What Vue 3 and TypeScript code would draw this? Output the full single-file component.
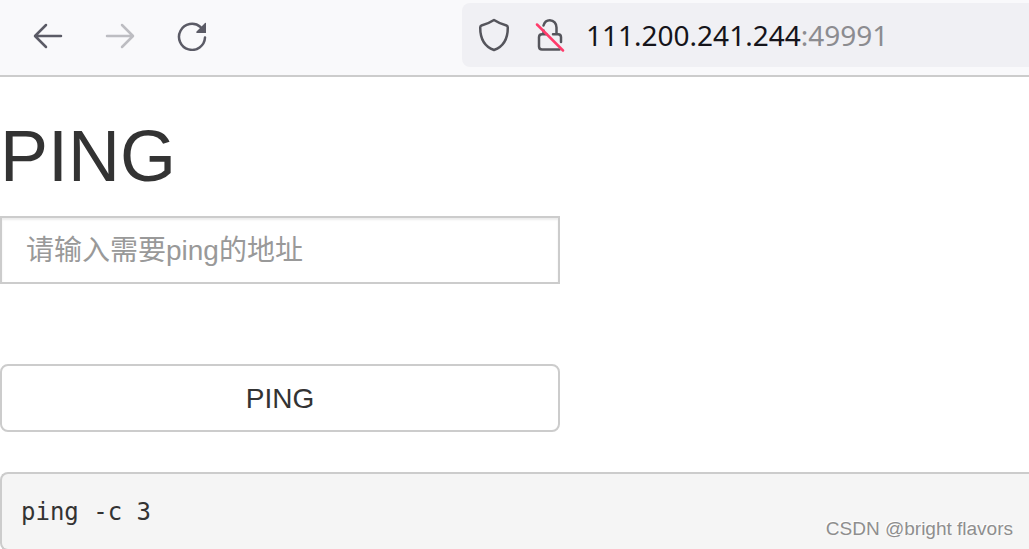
<script setup lang="ts">
import { ref } from 'vue'

const host = '111.200.241.244'
const port = ':49991'
const target = ref('')
const output = ref('ping -c 3')

function ping(): void {
  output.value = `ping -c 3 ${target.value}`.trim()
}
</script>

<template>
  <div class="window">
    <header class="toolbar">
      <nav class="controls" aria-label="Navigation">
        <button type="button" class="tool" aria-label="Back">
          <svg viewBox="0 0 32 32" width="32" height="32">
            <path d="M29 17H3.5M14 6 3 17l11 11" />
          </svg>
        </button>
        <button type="button" class="tool" aria-label="Forward" disabled>
          <svg viewBox="0 0 32 32" width="32" height="32">
            <path d="M3 17h25.5M18 6l11 11-11 11" />
          </svg>
        </button>
        <button type="button" class="tool" aria-label="Reload">
          <svg viewBox="0 0 32 32" width="32" height="32">
            <path d="M29 18.5A13 13 0 1 1 24.500 8" />
            <path class="solid" d="M30 4V14H21Q19.500 13.500 20.500 12.400L29 4Q29.500 3.500 30 4Z" />
          </svg>
        </button>
      </nav>
      <div class="address">
        <svg class="shield" viewBox="0 0 32 34" width="32" height="34" aria-hidden="true">
          <path d="M16 2 C11.500 5 7 6.500 3.500 7.500 Q2.200 8 2.200 9.500 C2.200 20 6 28.500 16 32 C26 28.500 29.800 20 29.800 9.500 Q29.800 8 28.500 7.500 C25 6.500 20.500 5 16 2Z" />
        </svg>
        <svg class="lock" viewBox="0 0 32 34" width="32" height="34" aria-hidden="true">
          <path d="M9.500 7.500C10.500 4 13 2.300 15.800 2.300C19.800 2.300 22.500 5.500 22.500 9.500V16.200M19 16.200H24Q27 16.200 27 19.200V24M9.500 12.500V16.200M12.500 16.200H8Q5 16.200 5 19.200V28.500Q5 31.500 8 31.500H25.500" />
          <path class="slash" d="M3 6.500 29 32.500" />
        </svg>
        <span class="url">{{ host }}<span class="port">{{ port }}</span></span>
      </div>
    </header>

    <main class="page">
      <h1>PING</h1>
      <form @submit.prevent="ping">
        <input v-model="target" type="text" aria-label="请输入需要ping的地址" placeholder="请输入需要ping的地址" />
        <button type="submit" class="submit">PING</button>
      </form>
      <pre>{{ output }}</pre>
    </main>
    <div class="credit">CSDN @bright flavors</div>
  </div>
</template>

<style>
body {
  margin: 0;
  background: #fff;
}
</style>

<style scoped>
.window {
  position: relative;
  height: 100vh;
  overflow: hidden;
  color: #333;
  font-family: "Liberation Sans", "Noto Sans CJK SC", sans-serif;
}
.toolbar {
  display: flex;
  align-items: center;
  box-sizing: border-box;
  height: 77px;
  padding: 3px 0 8px 32px;
  border-bottom: 2px solid #ccc;
  background: #f9f9fb;
}
.controls {
  display: flex;
  flex: none;
  gap: 40px;
  width: 430px;
}
.tool {
  display: flex;
  padding: 0;
  border: 0;
  background: none;
  color: #5b5b66;
}
.tool:disabled {
  color: #bdbdc2;
}
svg {
  flex: none;
  fill: none;
  stroke: currentColor;
  stroke-width: 2.5;
  stroke-linecap: round;
  stroke-linejoin: round;
}
.solid {
  fill: currentColor;
  stroke: none;
}
.slash {
  stroke: #ff3b6b;
}
.address {
  display: flex;
  flex: 1;
  align-items: center;
  height: 64px;
  padding-left: 16px;
  border-radius: 8px 0 0 8px;
  background: #f0f0f4;
  color: #55555c;
}
.lock {
  margin-left: 24px;
}
.url {
  margin-left: 20px;
  color: #15141a;
  font: 28px/40px "Noto Sans", "Open Sans", sans-serif;
  white-space: nowrap;
}
.port {
  color: #8c8c90;
}
.page {
  padding-top: 40px;
}
h1 {
  margin: 0 0 20px;
  font-size: 72px;
  font-weight: 400;
  line-height: 79px;
}
form {
  display: flex;
  flex-direction: column;
  gap: 80px;
  width: 560px;
  max-width: 100%;
}
input,
.submit {
  box-sizing: border-box;
  width: 100%;
  height: 68px;
  padding: 13px 24px 11px;
  border: 2px solid #ccc;
  background: #fff;
  color: #333;
  font: inherit;
  font-size: 28px;
  line-height: 40px;
}
input {
  border-radius: 0;
  box-shadow: inset 0 2px 2px rgba(0, 0, 0, 0.075);
}
input::placeholder {
  color: #999;
  opacity: 1;
}
.submit {
  border-radius: 8px;
}
pre {
  margin: 40px 0 0;
  padding: 20px 19px 18px;
  border: 2px solid #ccc;
  border-right: 0;
  border-radius: 8px 0 0 8px;
  background: #f5f5f5;
  font: 24px/37px "DejaVu Sans Mono", monospace;
}
.credit {
  position: absolute;
  right: 16px;
  bottom: 8px;
  color: #8e8e8e;
  font-size: 19px;
  line-height: 24px;
  text-shadow: -1px -1px 0 #fff;
}
</style>
